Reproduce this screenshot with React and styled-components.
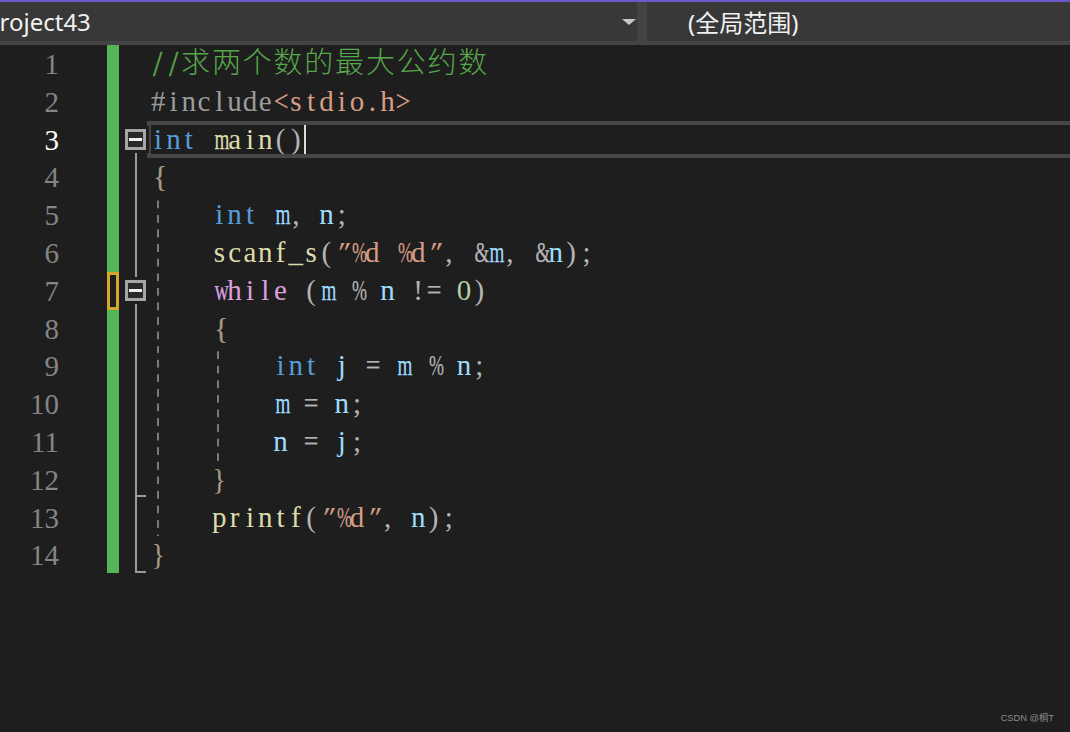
import React from "react";
import styled, { createGlobalStyle } from "styled-components";

const ROW = 37.8;
const TOP = 45;
const DASH_PERIOD = 14.5;

const Global = createGlobalStyle`
  html, body { margin: 0; padding: 0; background: #1e1e1e; }
  body { width: 1070px; height: 732px; overflow: hidden; }
`;

const Page = styled.div`
  position: relative;
  width: 1070px;
  height: 732px;
  background: #1e1e1e;
  overflow: hidden;
`;

const Toolbar = styled.div`
  display: flex;
  height: 39px;
  border-top: 2px solid #6a5acd;
  border-bottom: 4px solid #434343;
  background: #434343;
  gap: 10px;
`;

const Combo = styled.div`
  display: flex;
  align-items: center;
  background: #383838;
  color: #f1f1f1;
  font-family: "Noto Sans", "Noto Sans CJK SC", sans-serif;
  font-size: 24px;
  overflow: hidden;
  flex: ${(p) => (p.$wide ? "0 0 637px" : "1")};
  padding-left: ${(p) => p.$pad || 0}px;
  box-sizing: border-box;
`;

const ComboLabel = styled.span`
  flex: 1;
  white-space: nowrap;
  margin-left: ${(p) => p.$shift || 0}px;
`;

const Arrow = styled.span`
  width: 0;
  height: 0;
  border-left: 7px solid transparent;
  border-right: 7px solid transparent;
  border-top: 6px solid #c8c8c8;
  margin-right: 1px;
`;

const Editor = styled.div`
  display: flex;
  flex-direction: column;
`;

const Row = styled.div`
  position: relative;
  display: flex;
  height: ${ROW}px;
`;

const Num = styled.div`
  flex: 0 0 59px;
  text-align: right;
  font-family: "Liberation Serif", serif;
  font-size: 29px;
  line-height: ${ROW + 2}px;
  color: ${(p) => (p.$current ? "#ffffff" : "#858585")};
`;

const Change = styled.div`
  flex: 0 0 12px;
  margin-left: 48.4px;
  margin-bottom: ${(p) => (p.$last ? "1px" : "0")};
  box-sizing: border-box;
  background: ${(p) => (p.$mark ? "#1e1e1e" : "#55b559")};
  border: ${(p) => (p.$mark ? "3px solid #d4a82a" : "none")};
`;

const Fold = styled.div`
  position: relative;
  flex: 0 0 25.5px;
  margin-left: 5.6px;
  &::before {
    content: "";
    display: ${(p) => (p.$kind ? "block" : "none")};
    position: absolute;
    left: 10.5px;
    width: 2px;
    background: #9a9a9a;
    top: ${(p) => (p.$kind === "open" ? "31.5px" : "0")};
    bottom: ${(p) => (p.$last ? "1px" : "0")};
  }
  &::after {
    content: "";
    display: ${(p) => (p.$kind === "end" ? "block" : "none")};
    position: absolute;
    left: 10.5px;
    bottom: ${(p) => (p.$last ? "1px" : "2px")};
    width: 10.5px;
    height: 2px;
    background: #9a9a9a;
  }
`;

const FoldBox = styled.div`
  position: absolute;
  left: 0;
  top: 8.5px;
  width: 21px;
  height: 21px;
  box-sizing: border-box;
  border: 3px solid #a6a6a6;
  background: #2a2a2a;
  box-shadow: 0 0 0 3px #1e1e1e;
  display: flex;
  align-items: center;
  justify-content: center;
  z-index: 1;
  &::after {
    content: "";
    width: 13px;
    height: 3px;
    background: #f0f0f0;
  }
`;

const Code = styled.div`
  position: relative;
  flex: 1;
  font-family: "Liberation Serif", serif;
  font-size: 29px;
  line-height: ${ROW}px;
  white-space: pre;
  color: #b4b4b4;
`;

const CurrentLine = styled.div`
  position: absolute;
  left: -3.5px;
  right: 0;
  top: 0;
  bottom: 0;
  box-sizing: border-box;
  border: 4px solid #464646;
  border-right: none;
`;

const Caret = styled.span`
  display: inline-block;
  width: 2px;
  height: 33px;
  margin-left: 0.5px;
  background: #dcdcdc;
  vertical-align: -8px;
`;

const Guide = styled.div`
  position: absolute;
  top: 0;
  bottom: 0;
  left: ${(p) => p.$left}px;
  width: 2px;
  background-image: linear-gradient(to bottom, #7a7a7a 0 7.5px, transparent 7.5px);
  background-size: 2px ${DASH_PERIOD}px;
`;

const Tok = styled.span`
  color: ${(p) => p.$c};
`;

const Cell = styled.span`
  display: inline-block;
  width: 15.3px;
  text-align: center;
  transform: ${(p) => p.$tf || "none"};
  -webkit-text-stroke: ${(p) => (p.$tf ? "0.25px" : "0")};
`;

const Cjk = styled.span`
  font-family: "Noto Sans CJK SC", sans-serif;
  font-size: 29px;
  font-weight: 300;
  letter-spacing: 1.8px;
  vertical-align: 1px;
  line-height: 30px;
`;

const Watermark = styled.div`
  position: absolute;
  right: 16px;
  bottom: 8px;
  font-family: "Liberation Sans", "Noto Sans CJK SC", sans-serif;
  font-size: 9.3px;
  color: #8a8a8a;
`;

const GLYPH_FIT = {
  m: "scaleX(.66)",
  w: "scaleX(.68)",
  "%": "scaleX(.62)",
  "&": "scaleX(.66)",
  "<": "scaleX(.9)",
  ">": "scaleX(.9)",
  "=": "scaleX(.9)",
  '"': "skewX(-22deg)",
  "{": "translateX(2px)",
  "/": "scale(1.15, 1.2)",
};

const K = "#569cd6", F = "#dcdcaa", V = "#9cdcfe", S = "#d69d85", C = "#57a64a", W = "#d8a0df", P = "#b4b4b4", G = "#9b9b9b", N = "#b5cea8", B = "#a59a85";

const Mono = ({ c, t }) => (
  <Tok $c={c}>
    {[...t].map((ch, i) => (
      <Cell key={i} $tf={GLYPH_FIT[ch]}>{ch}</Cell>
    ))}
  </Tok>
);

const sp = [" ", P];
const G1 = [6.5, 200.7];
const G2 = [67, 351.7];

const lines = [
  { cjk: true, toks: [["//", C]] },
  { toks: [["#include", G], ["<stdio.h>", S]] },
  { fold: "open", box: true, current: true, toks: [["int", K], sp, ["main", F], ["()", P]] },
  { fold: "line", toks: [["{", B]] },
  { fold: "line", guides: [G1], toks: [["    ", P], ["int", K], sp, ["m", V], [", ", P], ["n", V], [";", P]] },
  { fold: "line", guides: [G1], toks: [["    ", P], ["scanf_s", F], ["(", P], ['"%d %d"', S], [", &", P], ["m", V], [", &", P], ["n", V], [");", P]] },
  { fold: "line", box: true, mark: true, guides: [G1], toks: [["    ", P], ["while", W], sp, ["(", P], ["m", V], [" % ", P], ["n", V], [" != ", P], ["0", N], [")", P]] },
  { fold: "line", guides: [G1], toks: [["    ", P], ["{", B]] },
  { fold: "line", guides: [G1, G2], toks: [["        ", P], ["int", K], sp, ["j", V], [" = ", P], ["m", V], [" % ", P], ["n", V], [";", P]] },
  { fold: "line", guides: [G1, G2], toks: [["        ", P], ["m", V], [" = ", P], ["n", V], [";", P]] },
  { fold: "line", guides: [G1, G2], toks: [["        ", P], ["n", V], [" = ", P], ["j", V], [";", P]] },
  { fold: "end", guides: [G1], toks: [["    ", P], ["}", B]] },
  { fold: "line", guides: [G1], toks: [["    ", P], ["printf", F], ["(", P], ['"%d"', S], [", ", P], ["n", V], [");", P]] },
  { fold: "end", last: true, toks: [["}", B]] },
];

export default function App() {
  return (
    <Page>
      <Global />
      <Toolbar>
        <Combo $wide>
          <ComboLabel $shift={-15}>Project43</ComboLabel>
          <Arrow />
        </Combo>
        <Combo $pad={41}>
          <ComboLabel>(全局范围)</ComboLabel>
        </Combo>
      </Toolbar>
      <Editor>
        {lines.map((l, i) => (
          <Row key={i}>
            <Num $current={l.current}>{i + 1}</Num>
            <Change $mark={l.mark} $last={l.last} />
            <Fold $kind={l.fold} $last={l.last}>{l.box && <FoldBox />}</Fold>
            <Code>
              {l.current && <CurrentLine />}
              {(l.guides || []).map(([left, anchor]) => (
                <Guide
                  key={left}
                  $left={left}
                  style={{ backgroundPositionY: `${anchor - (TOP + ROW * i)}px` }}
                />
              ))}
              {l.toks.map(([t, c], k) => (
                <Mono key={k} c={c} t={t} />
              ))}
              {l.cjk && (
                <Tok $c={C}>
                  <Cjk>求两个数的最大公约数</Cjk>
                </Tok>
              )}
              {l.current && <Caret />}
            </Code>
          </Row>
        ))}
      </Editor>
      <Watermark>CSDN @桐T</Watermark>
    </Page>
  );
}
